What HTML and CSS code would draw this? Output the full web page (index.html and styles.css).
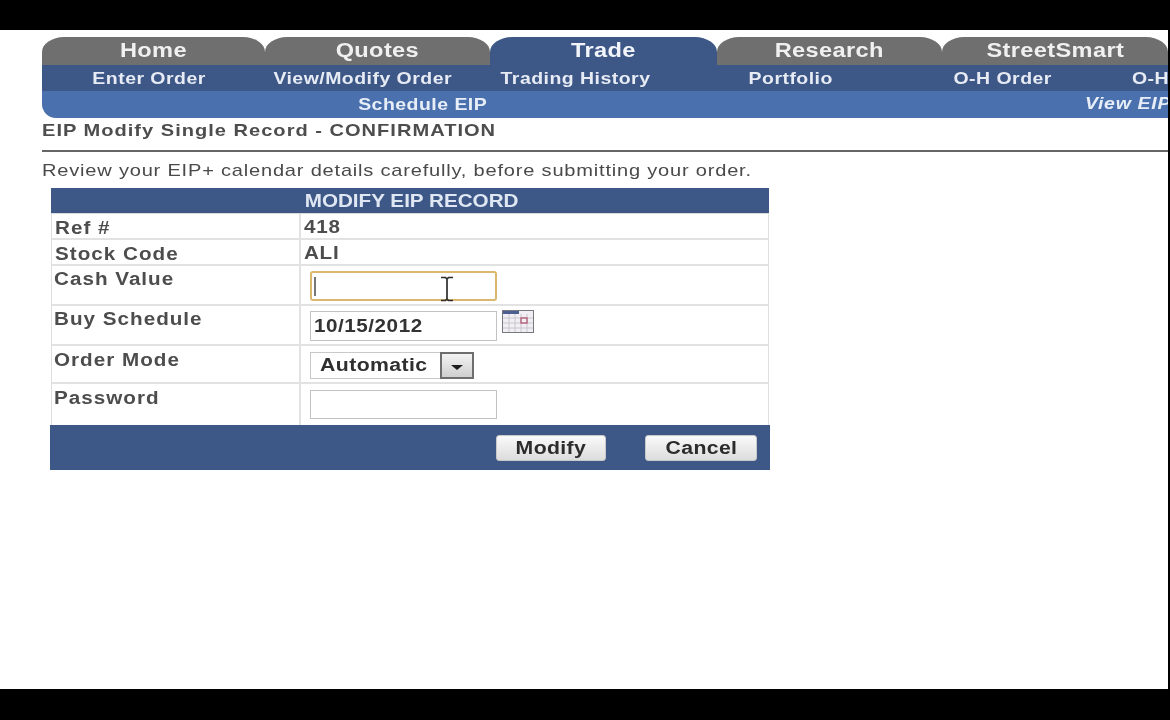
FILE: index.html
```html
<!DOCTYPE html>
<html lang="en">
<head>
<meta charset="utf-8">
<title>EIP Modify Single Record</title>
<link rel="stylesheet" href="styles.css">
</head>
<body>
<div class="letterbox-top"></div>
<main class="page">
  <nav class="tabs">
    <a class="tab"><span class="sx">Home</span></a>
    <a class="tab"><span class="sx">Quotes</span></a>
    <a class="tab active"><span class="sx">Trade</span></a>
    <a class="tab"><span class="sx">Research</span></a>
    <a class="tab"><span class="sx">StreetSmart</span></a>
  </nav>
  <div class="subnav">
    <a><span class="sx">Enter Order</span></a>
    <a><span class="sx">View/Modify Order</span></a>
    <a><span class="sx">Trading History</span></a>
    <a class="portfolio"><span class="sx">Portfolio</span></a>
    <a><span class="sx">O-H Order</span></a>
    <a class="clipped"><span class="sx left">O-H</span></a>
  </div>
  <div class="subnav2">
    <a class="sched"><span class="sx">Schedule EIP</span></a>
    <a class="view"><span class="sx left">View EIP</span></a>
  </div>
  <h1 class="title"><span class="sx left">EIP Modify Single Record - CONFIRMATION</span></h1>
  <hr class="rule">
  <p class="intro"><span class="sx left">Review your EIP+ calendar details carefully, before submitting your order.</span></p>
  <section class="record">
    <div class="record-head"><span class="sx">MODIFY EIP RECORD</span></div>
    <div class="row r1"><div class="lab lab-mid"><span class="sx left">Ref #</span></div><div class="val"><span class="sx left">418</span></div></div>
    <div class="row r2"><div class="lab lab-mid"><span class="sx left">Stock Code</span></div><div class="val"><span class="sx left">ALI</span></div></div>
    <div class="row r3">
      <div class="lab lab-up"><span class="sx left">Cash Value</span></div>
      <div class="ctl">
        <div class="focus-wrap"><input class="field focused" type="text" aria-label="Cash Value"><span class="caret"></span>
          <svg class="ibeam" width="14" height="26" viewBox="0 0 14 26"><path d="M1 1.500h4.500l1.500 1.500 1.500-1.500h4.500M7 3v20M1 24.500h4.500l1.500-1.500 1.500 1.500h4.500" fill="none" stroke="#2d2d2d" stroke-width="1.700"/></svg>
        </div>
      </div>
    </div>
    <div class="row r4">
      <div class="lab lab-up"><span class="sx left">Buy Schedule</span></div>
      <div class="ctl date">
        <div class="field date-field"><span class="sx left">10/15/2012</span></div>
        <svg class="cal" width="32" height="23" viewBox="0 0 32 23">
          <rect x="0.500" y="0.500" width="31" height="22" fill="#f1eff3" stroke="#77797f"/>
          <rect x="1" y="1" width="16" height="3" fill="#4c5f92"/>
          <path d="M1 8h30M1 13h30M1 18h30M7 4v18M13 4v18M19 4v18M25 4v18" stroke="#c9c6d0" fill="none"/>
          <rect x="19" y="8" width="6" height="5" fill="#f1eff3" stroke="#b4607a" stroke-width="1.400"/>
        </svg>
      </div>
    </div>
    <div class="row r5">
      <div class="lab"><span class="sx left">Order Mode</span></div>
      <div class="ctl">
        <div class="select"><span class="select-text"><span class="sx left">Automatic</span></span><span class="select-btn"><i></i></span></div>
      </div>
    </div>
    <div class="row r6">
      <div class="lab"><span class="sx left">Password</span></div>
      <div class="ctl"><input class="field pw" type="password" aria-label="Password"></div>
    </div>
    <div class="record-foot">
      <button class="btn" type="button"><span class="sx">Modify</span></button>
      <button class="btn" type="button"><span class="sx">Cancel</span></button>
    </div>
  </section>
</main>
<div class="letterbox-bottom"></div>
</body>
</html>
```
FILE: styles.css
```css
* { box-sizing: border-box; }
html, body { margin: 0; height: 720px; overflow: hidden; background: #000; }
body {
  display: flex;
  flex-direction: column;
  font-family: "Liberation Sans", Arial, sans-serif;
}
.letterbox-top { height: 30px; flex: none; }
.letterbox-bottom { height: 31px; flex: none; }
.page {
  height: 659px;
  width: 1168px;
  flex: none;
  background: #fff;
  padding: 7px 0 0 42px;
  overflow: hidden;
  position: relative;
  filter: blur(0.55px);
}
/* the source video is stretched horizontally: text is widened to match */
.sx {
  display: inline-block;
  white-space: nowrap;
  transform: scaleX(1.18);
  transform-origin: center;
}
.sx.left { transform-origin: left center; }
.tabs { display: flex; height: 28px; }
.tab {
  height: 28px;
  background: #6f6f6f;
  color: #f0f0f0;
  font-size: 20px;
  font-weight: bold;
  line-height: 26px;
  text-align: center;
  border-radius: 22px 22px 0 0 / 15px 15px 0 0;
  letter-spacing: 0.3px;
}
.tab:nth-child(1) { width: 223px; }
.tab:nth-child(2) { width: 225px; }
.tab:nth-child(3) { width: 227px; }
.tab:nth-child(4) { width: 225px; }
.tab:nth-child(5) { width: 226px; }
.tab.active { background: #3d5787; color: #f2f5fa; }
.subnav {
  height: 26px;
  background: #3d5787;
  display: flex;
  color: #e6ebf4;
  font-size: 16.500px;
  font-weight: bold;
  line-height: 26px;
  letter-spacing: 0.4px;
  overflow: hidden;
}
.subnav a { width: 213.500px; flex: none; text-align: center; white-space: nowrap; }
.subnav a.portfolio { padding-left: 3px; }
.subnav a.clipped { width: 60px; text-align: left; padding-left: 22px; }
.subnav2 {
  height: 27px;
  background: #4a70ae;
  border-radius: 0 0 0 14px;
  display: flex;
  color: #e8eef8;
  font-size: 16.500px;
  font-weight: bold;
  line-height: 27px;
  letter-spacing: 0.4px;
  overflow: hidden;
}
.sched { width: 762px; flex: none; text-align: center; }
.view { margin-left: 281px; font-style: italic; white-space: nowrap; line-height: 25px; letter-spacing: 0.6px; }
.title {
  margin: 3px 0 0;
  height: 20px;
  font-size: 17px;
  line-height: 20px;
  color: #4d4d4d;
  letter-spacing: 0.85px;
}
.rule { margin: 9px 0 0; height: 2px; border: 0; background: #666; }
.intro {
  margin: 10px 0 0;
  height: 18px;
  font-size: 17px;
  line-height: 18px;
  color: #4a4a4a;
  letter-spacing: 0.67px;
  white-space: nowrap;
}
.record { margin: 8px 0 0 8px; width: 720px; }
.record-head {
  height: 26px;
  margin: 0 1px;
  background: #3d5787;
  color: #dfe7f3;
  font-size: 17.500px;
  font-weight: bold;
  line-height: 26px;
  letter-spacing: 0;
  text-align: center;
  padding-left: 3px;
  border-bottom: 1px solid #d9d9d9;
}
.row {
  display: flex;
  margin: 0 1px;
  border-left: 1px solid #dfdfdf;
  border-right: 1px solid #dfdfdf;
  border-bottom: 2px solid #e2e2e2;
}
.r1 { height: 26px; }
.r2 { height: 26px; }
.r3 { height: 40px; }
.r4 { height: 40px; }
.r5 { height: 38px; }
.r6 { height: 41px; border-bottom: 0; }
.lab {
  width: 249px;
  flex: none;
  padding: 4px 0 0 2px;
  color: #4d4d4d;
  font-size: 17.500px;
  font-weight: bold;
  line-height: 20px;
  letter-spacing: 0.85px;
  border-right: 2px solid #e2e2e2;
}
.lab-mid { padding-top: 3px; line-height: 22px; padding-left: 3px; }
.lab-up { padding-top: 3px; }
.val {
  padding-left: 3px;
  color: #4d4d4d;
  font-size: 17.500px;
  font-weight: bold;
  line-height: 26px;
  letter-spacing: 0.6px;
}
.ctl { padding: 4px 0 0 9px; position: relative; }
.date { display: flex; gap: 5px; }
.field {
  display: block;
  width: 187px;
  height: 30px;
  border: 1px solid #c2c2c2;
  background: #fff;
  padding: 0 3px;
  margin: 0;
  font: bold 17.500px/31px "Liberation Sans", Arial, sans-serif;
  color: #333;
  outline: none;
  letter-spacing: 0.45px;
}
.date-field { margin-top: 1px; line-height: 29px; }
.pw { margin-top: 2px; height: 29px; }
.focus-wrap { position: relative; width: 187px; margin-top: 1px; }
.field.focused { border: 2px solid #dcb76e; border-radius: 3px; }
.caret { position: absolute; left: 4px; top: 6px; width: 2px; height: 19px; background: #777; }
.ibeam { position: absolute; left: 130px; top: 5px; }
.cal { margin-top: 0; }
.select {
  display: flex;
  align-items: center;
  width: 164px;
  height: 27px;
  margin-top: 2px;
  border: 1px solid #c9c9c9;
  color: #2f2f2f;
  font-size: 18px;
  font-weight: bold;
  letter-spacing: 0.35px;
  padding-left: 9px;
}
.select-text { flex: 1; }
.select-btn {
  width: 34px;
  height: 27px;
  margin-right: -1px;
  border: 2px solid #6e6e6e;
  background: linear-gradient(#f3f3f3, #cfcfcf);
  display: flex;
  align-items: center;
  justify-content: center;
}
.select-btn i {
  display: block;
  margin-top: 4px;
  border-left: 6px solid transparent;
  border-right: 6px solid transparent;
  border-top: 5px solid #1d1d1d;
}
.record-foot {
  height: 45px;
  background: #3d5787;
  display: flex;
  justify-content: flex-end;
  align-items: flex-start;
  gap: 39px;
  padding: 10px 13px 0 0;
}
.btn {
  width: 112px;
  height: 26px;
  border: 1px solid #c8c8c8;
  border-radius: 3px;
  background: linear-gradient(#fafafa, #dcdcdc);
  color: #2c2c2c;
  font: bold 18px/22px "Liberation Sans", Arial, sans-serif;
  letter-spacing: 0.3px;
  padding: 0;
}
.btn:first-child { width: 110px; }
```
